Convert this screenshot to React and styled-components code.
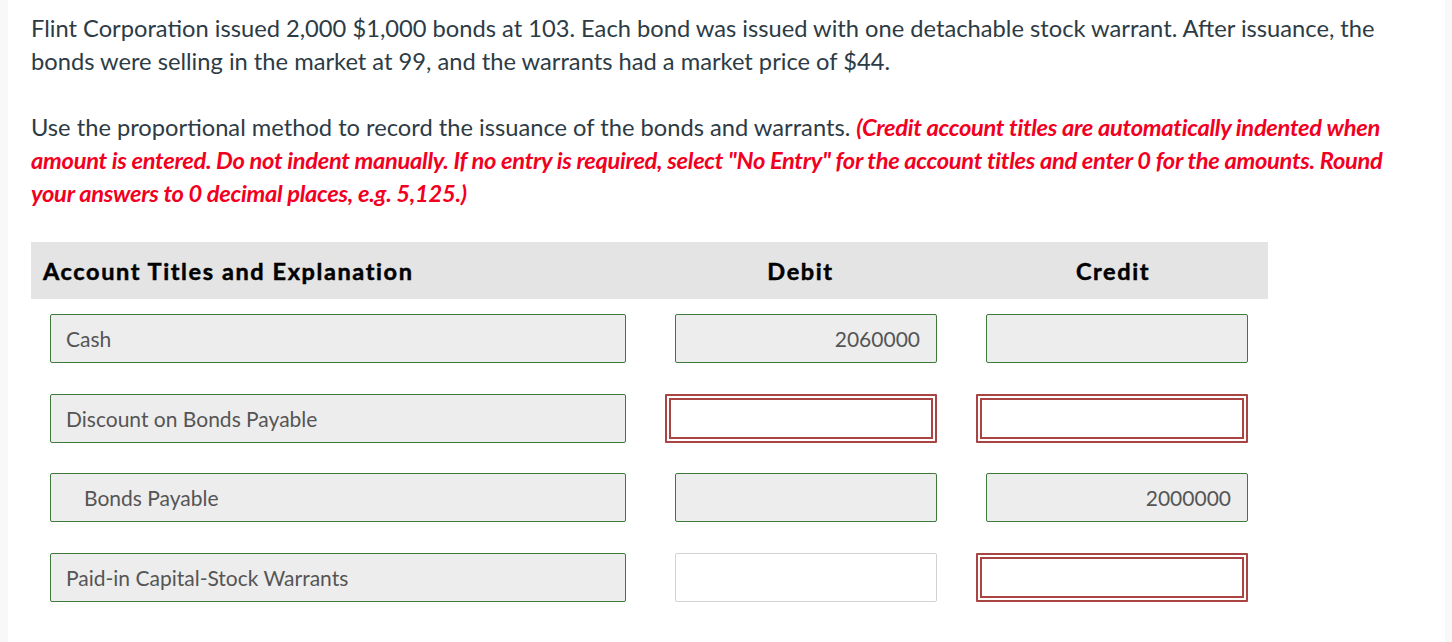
import React from 'react'
import styled, { createGlobalStyle, css } from 'styled-components'

const GlobalStyle = createGlobalStyle`
  html, body {
    margin: 0;
    padding: 0;
    background: #f8f8f8;
  }
  body {
    font-family: Lato, "Open Sans", "Liberation Sans", sans-serif;
  }
`

const Page = styled.div`
  margin: 0 7px 0 8px;
  min-height: 642px;
  background: #fff;
  padding: 12px 0 0 23px;
  box-sizing: border-box;
`

const Para = styled.p`
  margin: 0 0 ${p => (p.$last ? 32 : 33)}px;
  font-size: 23.7px;
  line-height: 33px;
  color: #2d3b45;
  max-width: 1376px;
`

const Note = styled.em`
  color: #f2001f;
  font-weight: 700;
  font-style: italic;
  letter-spacing: -0.3px;
`

const Table = styled.div`
  width: 1237px;
  display: grid;
  grid-template-columns: 612px 315px 310px;
`

const HeadCell = styled.div`
  background: #e4e4e4;
  height: 57px;
  display: flex;
  align-items: center;
  justify-content: ${p => (p.$center ? 'center' : 'flex-start')};
  padding-left: ${p => (p.$center ? '0' : '12px')};
  font-size: 23.5px;
  font-weight: 700;
  letter-spacing: 1.6px;
  -webkit-text-stroke: 0.5px #000;
  color: #000;
`

const Cell = styled.div`
  padding-top: ${p => p.$gap}px;
  padding-left: ${p => p.$pad}px;
`

const Field = styled.div`
  box-sizing: border-box;
  height: 49px;
  width: ${p => p.$w}px;
  display: flex;
  align-items: center;
  justify-content: ${p => (p.$right ? 'flex-end' : 'flex-start')};
  padding: 0 16px 0 ${p => (p.$indent ? 33 : 15)}px;
  font-size: 21px;
  color: #555;
  background: #ededed;
  border: 1px solid #3f7a3d;
  border-radius: 2px;

  ${p => p.$state === 'empty' && css`
    background: #fff;
    border-color: #d2d2d2;
  `}

  ${p => p.$state === 'error' && css`
    background: #fff;
    border: 2px solid #a94442;
    border-radius: 1px;
    box-shadow: inset 0 0 0 2px #fff, inset 0 0 0 4px #a94442;
    margin-left: -10px;
    width: ${p.$w + 10}px;
  `}
`

const rows = [
  { account: 'Cash', gap: 15, debit: '2060000', credit: '', dState: 'ok', cState: 'ok' },
  { account: 'Discount on Bonds Payable', gap: 31, debit: '', credit: '', dState: 'error', cState: 'error' },
  { account: 'Bonds Payable', gap: 30, indent: true, debit: '', credit: '2000000', dState: 'ok', cState: 'ok' },
  { account: 'Paid-in Capital-Stock Warrants', gap: 31, debit: '', credit: '', dState: 'empty', cState: 'error' },
]

export default function App() {
  return (
    <Page>
      <GlobalStyle />
      <Para>
        Flint Corporation issued 2,000 $1,000 bonds at 103. Each bond was issued with one detachable stock warrant. After issuance, the bonds were selling in the market at 99, and the warrants had a market price of $44.
      </Para>
      <Para $last>
        Use the proportional method to record the issuance of the bonds and warrants.{' '}
        <Note>
          (Credit account titles are automatically indented when amount is entered. Do not indent manually. If no entry is required, select "No Entry" for the account titles and enter 0 for the amounts. Round your answers to 0 decimal places, e.g. 5,125.)
        </Note>
      </Para>
      <Table>
        <HeadCell>Account Titles and Explanation</HeadCell>
        <HeadCell $center>Debit</HeadCell>
        <HeadCell $center>Credit</HeadCell>
        {rows.map(r => (
          <React.Fragment key={r.account}>
            <Cell $gap={r.gap} $pad={19}>
              <Field $w={576} $indent={r.indent}>{r.account}</Field>
            </Cell>
            <Cell $gap={r.gap} $pad={32}>
              <Field $w={262} $right $state={r.dState}>{r.debit}</Field>
            </Cell>
            <Cell $gap={r.gap} $pad={28}>
              <Field $w={262} $right $state={r.cState}>{r.credit}</Field>
            </Cell>
          </React.Fragment>
        ))}
      </Table>
    </Page>
  )
}
